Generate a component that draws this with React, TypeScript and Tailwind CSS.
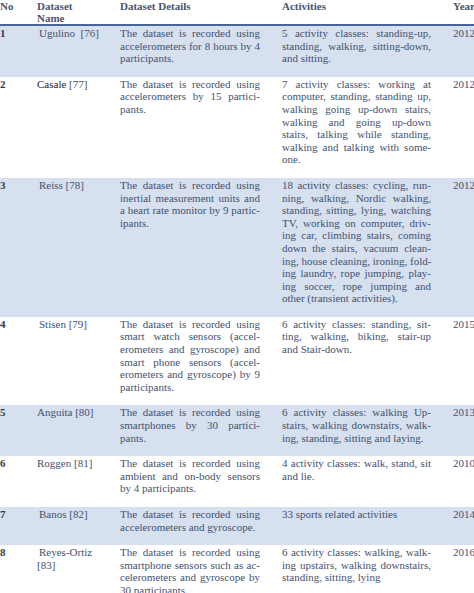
import React from 'react';

type Row = {
  no: string;
  name: React.ReactNode[];
  nameIndent?: boolean[];
  details: string[];
  acts: string[];
  year: string;
  blue: boolean;
};

const rows: Row[] = [
  {
    no: '1',
    name: ['Ugulino\u00a0\u00a0[76]'],
    nameIndent: [true],
    details: ['The dataset is recorded using', 'accelerometers for 8 hours by 4', 'participants.'],
    acts: ['5 activity classes: standing-up,', 'standing, walking, sitting-down,', 'and sitting.'],
    year: '2012',
    blue: true,
  },
  {
    no: '2',
    name: [
      <span key="c">
        <span className="text-[#1f2430] font-medium">Casale</span> [77]
      </span>,
    ],
    details: ['The dataset is recorded using', 'accelerometers by 15 partici-', 'pants.'],
    acts: [
      '7 activity classes: working at',
      'computer, standing, standing up,',
      'walking going up-down stairs,',
      'walking and going up-down',
      'stairs, talking while standing,',
      'walking and talking with some-',
      'one.',
    ],
    year: '2012',
    blue: false,
  },
  {
    no: '3',
    name: ['Reiss [78]'],
    nameIndent: [true],
    details: ['The dataset is recorded using', 'inertial measurement units and', 'a heart rate monitor by 9 partic-', 'ipants.'],
    acts: [
      '18 activity classes: cycling, run-',
      'ning, walking, Nordic walking,',
      'standing, sitting, lying, watching',
      'TV, working on computer, driv-',
      'ing car, climbing stairs, coming',
      'down the stairs, vacuum clean-',
      'ing, house cleaning, ironing, fold-',
      'ing laundry, rope jumping, play-',
      'ing soccer, rope jumping and',
      'other (transient activities).',
    ],
    year: '2012',
    blue: true,
  },
  {
    no: '4',
    name: ['Stisen [79]'],
    nameIndent: [true],
    details: [
      'The dataset is recorded using',
      'smart watch sensors (accel-',
      'erometers and gyroscope) and',
      'smart phone sensors (accel-',
      'erometers and gyroscope) by 9',
      'participants.',
    ],
    acts: ['6 activity classes: standing, sit-', 'ting, walking, biking, stair-up', 'and Stair-down.'],
    year: '2015',
    blue: false,
  },
  {
    no: '5',
    name: ['Anguita [80]'],
    details: ['The dataset is recorded using', 'smartphones by 30 partici-', 'pants.'],
    acts: ['6 activity classes: walking Up-', 'stairs, walking downstairs, walk-', 'ing, standing, sitting and laying.'],
    year: '2013',
    blue: true,
  },
  {
    no: '6',
    name: ['Roggen [81]'],
    details: ['The dataset is recorded using', 'ambient and on-body sensors', 'by 4 participants.'],
    acts: ['4 activity classes: walk, stand, sit', 'and lie.'],
    year: '2010',
    blue: false,
  },
  {
    no: '7',
    name: ['Banos [82]'],
    nameIndent: [true],
    details: ['The dataset is recorded using', 'accelerometers and gyroscope.'],
    acts: ['33 sports related activities'],
    year: '2014',
    blue: true,
  },
  {
    no: '8',
    name: ['Reyes-Ortiz', '[83]'],
    nameIndent: [true, false],
    details: [
      'The dataset is recorded using',
      'smartphone sensors such as ac-',
      'celerometers and gyroscope by',
      '30 participants.',
    ],
    acts: ['6 activity classes: walking, walk-', 'ing upstairs, walking downstairs,', 'standing, sitting, lying'],
    year: '2016',
    blue: false,
  },
];

function Para({ lines, width }: { lines: string[]; width: string }) {
  return (
    <div className={width}>
      {lines.map((l, i) => (
        <div
          key={i}
          className={
            i < lines.length - 1
              ? 'whitespace-nowrap text-justify [text-align-last:justify]'
              : 'whitespace-nowrap'
          }
        >
          {l}
        </div>
      ))}
    </div>
  );
}

export default function App() {
  return (
    <div
      className="w-[474px] h-[593px] overflow-hidden bg-white text-[11px] leading-[12.6px] text-[#43526f]"
      style={{ fontFamily: '"Liberation Serif", "Times New Roman", serif' }}
    >
      <div className="flex h-[26px] border-b-2 border-[#46669a] bg-white font-semibold leading-[12px] text-[#4a556e]">
        <div className="w-[37px] shrink-0">No</div>
        <div className="w-[83px] shrink-0">
          <div>Dataset</div>
          <div>Name</div>
        </div>
        <div className="w-[162px] shrink-0">Dataset Details</div>
        <div className="w-[171px] shrink-0">Activities</div>
        <div className="flex-1 whitespace-nowrap">Year</div>
      </div>
      {rows.map((r) => (
        <div
          key={r.no}
          className={`flex pt-[1px] pb-[12px] ${r.blue ? 'bg-[#d6e0ef]' : 'bg-white'}`}
        >
          <div className="w-[37px] shrink-0 font-bold text-[#323b52]">{r.no}</div>
          <div className="w-[83px] shrink-0">
            {r.name.map((n, i) => (
              <div key={i} className={r.nameIndent && r.nameIndent[i] ? 'pl-[2px] whitespace-nowrap' : 'whitespace-nowrap'}>
                {n}
              </div>
            ))}
          </div>
          <div className="w-[162px] shrink-0">
            <Para lines={r.details} width="w-[140px]" />
          </div>
          <div className="w-[171px] shrink-0">
            <Para lines={r.acts} width="w-[149px]" />
          </div>
          <div className="flex-1 whitespace-nowrap">{r.year}</div>
        </div>
      ))}
    </div>
  );
}
